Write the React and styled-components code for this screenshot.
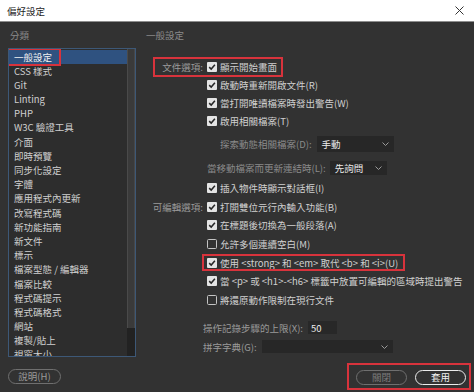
import React from "react";
import styled, { createGlobalStyle } from "styled-components";

const Global = createGlobalStyle`
  html, body { margin: 0; padding: 0; background: #323232; }
  body {
    width: 474px; height: 392px; overflow: hidden;
    font-family: "Noto Sans CJK TC", "Noto Sans", sans-serif;
  }
  * { box-sizing: border-box; }
`;

const Window = styled.div`
  width: 474px;
  height: 392px;
  display: flex;
  flex-direction: column;
  background: #323232;
  color: #d0d0d0;
  font-size: 9.5px;
`;

const TitleBar = styled.div`
  height: 22px;
  flex: none;
  background: #ffffff;
  border-bottom: 1px solid #8e8e8e;
  display: flex;
  align-items: center;
  justify-content: space-between;
  padding: 0 10px 0 7px;
  color: #1e1e1e;
  font-size: 9.5px;
`;

const Body = styled.div`
  flex: 1;
  display: grid;
  grid-template-columns: 128px 1fr;
  column-gap: 10px;
  padding-left: 8px;
`;

const Side = styled.div`
  display: flex;
  flex-direction: column;
  padding-top: 6px;
`;

const Caption = styled.div`
  height: 14px;
  line-height: 14px;
  color: #8a8a8a;
  padding-left: ${(p) => p.$pl || 0}px;
`;

const ListBox = styled.div`
  margin-top: 6px;
  height: 309px;
  border: 1px solid #3d5877;
  background: #2d2d2d;
  display: flex;
  overflow: hidden;
`;

const Items = styled.ul`
  flex: 1;
  margin: 0;
  padding: 0.5px 0 0;
  list-style: none;
  overflow: hidden;
`;

const Item = styled.li`
  height: 14.2px;
  line-height: 14.2px;
  padding-left: ${(p) => (p.$selected ? 0 : 5)}px;
  background: ${(p) => (p.$selected ? "#2f5280" : "transparent")};
  color: ${(p) => (p.$selected ? "#f0f0f0" : "#d0d0d0")};
  white-space: nowrap;
`;

const SelMark = styled.span`
  display: inline-block;
  height: 14.2px;
  padding: 0 7px 0 5px;
  outline: 2px solid #d8333c;
`;

const ScrollTrack = styled.div`
  width: 8px;
  flex: none;
  background: #222222;
  display: flex;
  flex-direction: column;
`;

const ScrollThumb = styled.div`
  height: 279px;
  background: #3a3a3a;
  border-left: 1px solid #4a4a4a;
  border-right: 1px solid #474747;
`;

const PillButton = styled.button`
  height: 15px;
  width: ${(p) => p.$w}px;
  padding: 0;
  border-radius: 8px;
  font-family: inherit;
  font-size: 9.5px;
  line-height: 13px;
  background: transparent;
  border: ${(p) => (p.$primary ? "1.5px solid #ececec" : "1px solid #6f6f6f")};
  color: ${(p) => (p.$primary ? "#f0f0f0" : p.$dim ? "#7a7a7a" : "#9a9a9a")};
`;

const HelpWrap = styled.div`
  margin-top: 12px;
`;

const Main = styled.div`
  display: flex;
  flex-direction: column;
  padding-top: 6px;
`;

const Row = styled.div`
  display: flex;
  align-items: center;
  height: ${(p) => p.$h || 18}px;
  margin-top: ${(p) => p.$mt || 0}px;
  padding-left: ${(p) => p.$pl || 0}px;
  white-space: nowrap;
`;

const Frame = styled.div`
  display: flex;
  align-items: center;
  height: ${(p) => p.$h}px;
  padding: ${(p) => p.$pad};
  gap: ${(p) => p.$gap || 0}px;
  outline: 2px solid #d8333c;
  outline-offset: 1px;
`;

const FieldLabel = styled.span`
  display: inline-block;
  width: ${(p) => p.$w}px;
  text-align: right;
  margin-right: 4px;
  color: ${(p) => p.$color || "#9a9a9a"};
`;

const PlainLabel = styled.span`
  color: ${(p) => p.$color || "#9a9a9a"};
  margin-right: ${(p) => p.$mr || 5}px;
`;

const Text = styled.span`
  margin-left: 3px;
  color: #d0d0d0;
`;

const Box = styled.svg`
  flex: none;
  display: block;
`;

const Select = styled.div`
  width: ${(p) => p.$w}px;
  height: ${(p) => p.$h}px;
  background: #272727;
  display: flex;
  align-items: center;
  justify-content: space-between;
  padding: 0 5px 0 5px;
  color: #ececec;
`;

const Input = styled.div`
  width: ${(p) => p.$w}px;
  height: 13px;
  background: #282828;
  display: flex;
  align-items: center;
  padding-left: 3px;
  color: #ececec;
`;

const Footer = styled.div`
  display: flex;
  margin-top: 10px;
  padding-left: 204px;
`;

const Check = ({ on = true }) => (
  <Box viewBox="0 0 10 10" width="10" height="10">
    {on ? (
      <>
        <rect x="0" y="0" width="10" height="10" rx="1" fill="#e4e4e4" />
        <path d="M2.2 5.1 L4.2 7.1 L7.9 2.8" fill="none" stroke="#262626" strokeWidth="1.5" />
      </>
    ) : (
      <rect x="0.5" y="0.5" width="9" height="9" rx="1" fill="none" stroke="#c4c4c4" strokeWidth="1" />
    )}
  </Box>
);

const Chevron = () => (
  <Box viewBox="0 0 7 4" width="7" height="4">
    <path d="M0.5 0.5 L3.5 3.5 L6.5 0.5" fill="none" stroke="#9a9a9a" strokeWidth="1" />
  </Box>
);

const CloseIcon = () => (
  <Box viewBox="0 0 9 9" width="9" height="9">
    <path d="M0.5 0.5 L8.5 8.5 M8.5 0.5 L0.5 8.5" stroke="#333" strokeWidth="1" />
  </Box>
);

const categories = [
  "一般設定", "CSS 樣式", "Git", "Linting", "PHP", "W3C 驗證工具", "介面", "即時預覽",
  "同步化設定", "字體", "應用程式內更新", "改寫程式碼", "新功能指南", "新文件", "標示",
  "檔案型態 / 編輯器", "檔案比較", "程式碼提示", "程式碼格式", "網站", "複製/貼上", "視窗大小",
];

export default function App() {
  return (
    <>
      <Global />
      <Window>
        <TitleBar>
          <span>偏好設定</span>
          <CloseIcon />
        </TitleBar>
        <Body>
          <Side>
            <Caption $pl={2}>分類</Caption>
            <ListBox>
              <Items>
                {categories.map((c, i) =>
                  i === 0 ? (
                    <Item key={c} $selected>
                      <SelMark>{c}</SelMark>
                    </Item>
                  ) : (
                    <Item key={c}>{c}</Item>
                  )
                )}
              </Items>
              <ScrollTrack>
                <ScrollThumb />
              </ScrollTrack>
            </ListBox>
            <HelpWrap>
              <PillButton $w={53}>說明(H)</PillButton>
            </HelpWrap>
          </Side>

          <Main>
            <Caption>一般設定</Caption>

            <Row $mt={16} $pl={10}>
              <Frame $h={14} $pad="0 3px 0 4px">
                <FieldLabel $w={43}>文件選項:</FieldLabel>
                <Check />
                <Text>顯示開始畫面</Text>
              </Frame>
            </Row>
            <Row $pl={61}><Check /><Text>啟動時重新開啟文件(R)</Text></Row>
            <Row $pl={61}><Check /><Text>當打開唯讀檔案時發出警告(W)</Text></Row>
            <Row $pl={61}><Check /><Text>啟用相關檔案(T)</Text></Row>

            <Row $h={20} $mt={4} $pl={74}>
              <PlainLabel $color="#8a8a8a">探索動態相關檔案(D):</PlainLabel>
              <Select $w={77} $h={16}>手動<Chevron /></Select>
            </Row>
            <Row $h={20} $mt={4} $pl={61}>
              <PlainLabel $color="#8a8a8a" $mr={4}>當移動檔案而更新連結時(L):</PlainLabel>
              <Select $w={57} $h={14}>先詢問<Chevron /></Select>
            </Row>

            <Row $h={18.7} $mt={0.6} $pl={61}><Check /><Text>插入物件時顯示對話框(I)</Text></Row>
            <Row $h={18.7}>
              <FieldLabel $w={57}>可編輯選項:</FieldLabel>
              <Check /><Text>打開雙位元行內輸入功能(B)</Text>
            </Row>
            <Row $h={18.7} $pl={61}><Check /><Text>在標題後切換為一般段落(A)</Text></Row>
            <Row $h={18.7} $pl={61}><Check on={false} /><Text>允許多個連續空白(M)</Text></Row>
            <Row $h={18.7} $pl={59}>
              <Frame $h={11} $pad="0 4px 0 2px">
                <Check /><Text>{"使用 <strong> 和 <em> 取代 <b> 和 <i>(U)"}</Text>
              </Frame>
            </Row>
            <Row $h={18.7} $pl={61}><Check /><Text>{"當 <p> 或 <h1>-<h6> 標籤中放置可編輯的區域時提出警告"}</Text></Row>
            <Row $h={18.7} $pl={61}><Check on={false} /><Text>將還原動作限制在現行文件</Text></Row>

            <Row $mt={9.5} $pl={57}>
              <PlainLabel>操作記錄步驟的上限(X):</PlainLabel>
              <Input $w={29}>50</Input>
            </Row>
            <Row $mt={1} $pl={57}>
              <PlainLabel>拼字字典(G):</PlainLabel>
              <Select $w={131} $h={13}><span /><Chevron /></Select>
            </Row>

            <Footer>
              <Frame $h={21} $pad="3px 2px 1px 6px" $gap={8}>
                <PillButton $w={51} $dim>關閉</PillButton>
                <PillButton $w={51} $primary>套用</PillButton>
              </Frame>
            </Footer>
          </Main>
        </Body>
      </Window>
    </>
  );
}
